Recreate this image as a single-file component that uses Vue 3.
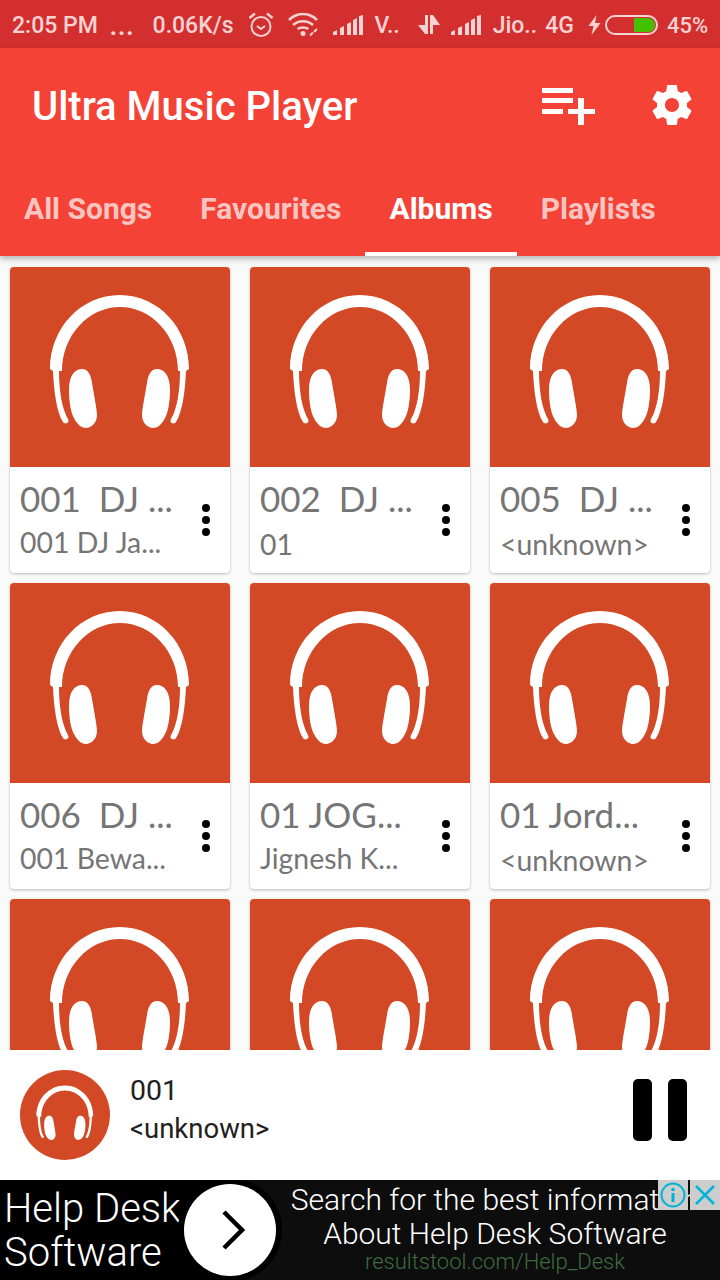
<template>
  <div class="phone">
    <div class="status">
      <span class="st-time">2:05 PM</span>
      <span class="st-dots">...</span>
      <span class="st-speed">0.06K/s</span>
      <svg class="st-alarm" width="26" height="26" viewBox="0 0 26 26" fill="none" stroke="#f8d2d2" stroke-width="2">
        <circle cx="13" cy="14.500" r="9.500" />
        <path d="M9 14l4 3 4-3" />
        <path d="M1.500 6l5.500-4.500M24.500 6L19 1.500" stroke-width="2.500" />
      </svg>
      <svg class="st-wifi" width="32" height="24" viewBox="0 0 32 24" fill="none" stroke="#f8d2d2" stroke-width="2.500">
        <path d="M1 7c8-8 20-8 28 0M5 12c6-5 14-5 20 0M9.500 16c3-2 8-2 11 0" />
        <circle cx="15" cy="20.500" r="2.500" fill="#f8d2d2" stroke="none" />
        <path d="M22 22.500l3-3M26 19l3-3" stroke-width="2" />
      </svg>
      <svg class="st-signal" width="30" height="20" viewBox="0 0 30 20" fill="#f8d2d2">
        <path d="M0 20v-3l4-2v5zM7 20v-7l4-2v9zM14 20V9l4-2v13zM20 20V5l4-2v17zM26 20V1l4-1v20z" />
      </svg>
      <span class="st-carrier first">V..</span>
      <svg class="st-arrows" width="22" height="20" viewBox="0 0 22 20" fill="#f8d2d2">
        <path d="M7 0h3v19H7zM0 10h7v9zM12 0h3v19h-3zM15 0l7 10h-7z" />
      </svg>
      <svg class="st-signal second" width="30" height="20" viewBox="0 0 30 20" fill="#f8d2d2">
        <path d="M0 20v-3l4-2v5zM7 20v-7l4-2v9zM14 20V9l4-2v13zM20 20V5l4-2v17zM26 20V1l4-1v20z" />
      </svg>
      <span class="st-carrier jio">Jio..</span>
      <span class="st-carrier net">4G</span>
      <svg class="st-bolt" width="13" height="20" viewBox="0 0 12 20" fill="#f8d2d2">
        <path d="M8 0L0 11h5l-2 9 9-12H6.500z" />
      </svg>
      <div class="st-battery"><div class="st-charge"></div></div>
      <span class="st-pct">45%</span>
    </div>

    <header class="appbar">
      <div class="toolbar">
        <h1 class="title">Ultra Music Player</h1>
        <svg class="queue-icon" width="53" height="37" viewBox="0 0 53 37" fill="#fff">
          <path d="M0 0h31v5H0zM0 10h31v5H0zM0 21h21v5H0zM26 21h10V10h6v11h11v5H42v11h-6V26H26z" />
        </svg>
        <svg class="gear-icon" width="48" height="48" viewBox="0 0 24 24" fill="#fff">
          <path d="M19.430 12.980c.040-.320.070-.640.070-.980s-.030-.660-.070-.980l2.110-1.650c.190-.150.240-.420.120-.640l-2-3.460c-.120-.220-.390-.300-.610-.220l-2.490 1c-.520-.400-1.080-.730-1.690-.980l-.380-2.650C14.460 2.180 14.250 2 14 2h-4c-.250 0-.460.180-.490.420l-.380 2.650c-.610.250-1.170.590-1.690.980l-2.490-1c-.230-.090-.490 0-.610.220l-2 3.460c-.130.220-.070.490.120.640l2.110 1.650c-.040.320-.070.650-.070.980s.030.660.070.980l-2.110 1.650c-.190.150-.240.420-.120.640l2 3.460c.120.220.390.300.610.220l2.490-1c.520.400 1.080.730 1.690.980l.380 2.650c.030.240.240.420.490.420h4c.250 0 .460-.180.490-.420l.380-2.650c.610-.250 1.170-.590 1.690-.980l2.490 1c.230.090.490 0 .610-.220l2-3.460c.120-.220.070-.490-.120-.640l-2.110-1.650zM12 15.500c-1.930 0-3.500-1.570-3.500-3.500s1.570-3.500 3.500-3.500 3.500 1.570 3.500 3.500-1.570 3.500-3.500 3.500z" />
        </svg>
      </div>
      <nav class="tabs">
        <div
          v-for="tab in tabs"
          :key="tab"
          class="tab"
          :class="{ active: tab === 'Albums' }"
        >
          {{ tab }}
        </div>
      </nav>
    </header>

    <main class="grid">
      <div v-for="(album, index) in albums" :key="index" class="card">
        <div class="cover">
          <svg width="220" height="200" viewBox="0 0 220 200">
            <path :d="headphones" fill="#fff" />
          </svg>
        </div>
        <div class="info">
          <div class="texts">
            <div class="album-title">{{ album.title }}</div>
            <div class="album-sub" :class="{ clipped: album.sub.endsWith('...') }">{{ album.sub }}</div>
          </div>
          <div class="more"><i></i><i></i><i></i></div>
        </div>
      </div>
    </main>

    <section class="player">
      <div class="disc">
        <svg width="90" height="90" viewBox="0 0 220 200">
          <path :d="headphones" fill="#fff" />
        </svg>
      </div>
      <div class="now">
        <div class="now-title">001</div>
        <div class="now-sub">&lt;unknown&gt;</div>
      </div>
      <div class="pause"><i></i><i></i></div>
    </section>

    <footer class="ad">
      <div class="ad-left">Help Desk<br />Software</div>
      <div class="ad-go">
        <svg width="24" height="40" viewBox="0 0 24 40" fill="none" stroke="#000" stroke-width="4.500">
          <path d="M3 2l18 18L3 38" />
        </svg>
      </div>
      <div class="ad-right">
        <div class="ad-line one">Search for the best information</div>
        <div class="ad-line two">About Help Desk Software</div>
        <div class="ad-url">resultstool.com/Help_Desk</div>
      </div>
      <div class="ad-badges">
        <span class="badge">
          <svg width="26" height="26" viewBox="0 0 26 26" fill="none" stroke="#00b4d8" stroke-width="2">
            <circle cx="13" cy="13" r="11.500" />
            <path d="M13 11v9" stroke-width="3" />
            <circle cx="13" cy="7.500" r="1.800" fill="#00b4d8" stroke="none" />
          </svg>
        </span>
        <span class="badge">
          <svg width="22" height="22" viewBox="0 0 22 22" fill="none" stroke="#00b4d8" stroke-width="2.500">
            <path d="M2 2l18 18M20 2L2 20" />
          </svg>
        </span>
      </div>
    </footer>
  </div>
</template>

<script setup>
const tabs = ['All Songs', 'Favourites', 'Albums', 'Playlists']

// last row is covered by the player, so its texts stay empty
const albums = [
  { title: '001  DJ ...', sub: '001 DJ Ja...' },
  { title: '002  DJ ...', sub: '01' },
  { title: '005  DJ ...', sub: '<unknown>' },
  { title: '006  DJ ...', sub: '001 Bewa...' },
  { title: '01 JOG...', sub: 'Jignesh K...' },
  { title: '01 Jord...', sub: '<unknown>' },
  { title: '', sub: '' },
  { title: '', sub: '' },
  { title: '', sub: '' },
]

// band, the two wires and the two ear cups, in cover coordinates
const headphones =
  'M40 102 C40 61 71 28 110 28 C148 28 179 61 179 102 L176 104 L168 104 C168 69 142 40 110 40 C78 40 52 69 52 104 L43 104 Z ' +
  'M43 104 L49 104 C49 124 52 142 58 152 C60 156 55 158 53 155 C47 146 44 126 43 104 Z ' +
  'M176 104 L170 104 C170 124 167 142 161 152 C159 156 164 158 166 155 C172 146 175 126 176 104 Z ' +
  'M72 102 C65 102 59 108 59 123 C59 135 61 146 64 151 C67 157 71 161 76 161 C81 161 87 156 87 148 C87 143 84 128 82 116 C81 108 78 102 72 102 Z ' +
  'M147 102 C154 102 160 108 160 123 C160 135 158 146 155 151 C152 157 148 161 143 161 C138 161 132 156 132 148 C132 143 135 128 137 116 C138 108 141 102 147 102 Z'
</script>

<style>
html,
body {
  margin: 0;
  background: #fafafa;
}
</style>

<style scoped>
.phone {
  width: 720px;
  height: 1280px;
  display: flex;
  flex-direction: column;
  overflow: hidden;
  background: #fafafa;
  font-family: Roboto, sans-serif;
}

.status {
  height: 48px;
  flex: none;
  box-sizing: border-box;
  display: flex;
  align-items: center;
  padding: 2px 0 0 12px;
  background: #d32f2f;
  color: #f8d2d2;
  font-size: 23px;
  font-weight: 500;
  white-space: nowrap;
}

.st-dots {
  margin-left: 12px;
  font-weight: 700;
  font-size: 25px;
  letter-spacing: 1px;
  position: relative;
  top: 1px;
}

.st-speed {
  margin-left: 18px;
}

.st-alarm {
  margin-left: 14px;
}

.st-wifi {
  margin-left: 14px;
}

.st-signal {
  margin-left: 13px;
}

.st-carrier.first {
  margin-left: 12px;
}

.st-arrows {
  margin-left: 18px;
}

.st-signal.second {
  margin-left: 11px;
}

.st-carrier.jio {
  margin-left: 12px;
}

.st-carrier.net {
  margin-left: 8px;
}

.st-bolt {
  margin-left: 14px;
}

.st-battery {
  width: 53px;
  height: 20px;
  margin-left: 4px;
  box-sizing: border-box;
  border: 2px solid #f8d2d2;
  border-radius: 10px;
  overflow: hidden;
  display: flex;
  justify-content: flex-end;
  padding: 1px;
}

.st-charge {
  width: 21px;
  background: #43c000;
  border-radius: 0 7px 7px 0;
}

.st-pct {
  margin-left: 9px;
  font-size: 22px;
}

.appbar {
  height: 208px;
  flex: none;
  display: flex;
  flex-direction: column;
  background: #f44336;
  box-shadow: 0 3px 6px rgba(0, 0, 0, 0.28);
  position: relative;
  z-index: 2;
}

.toolbar {
  height: 112px;
  box-sizing: border-box;
  display: flex;
  align-items: center;
  padding: 4px 24px 0 32px;
}

.title {
  flex: 1;
  margin: 0;
  color: #fff;
  font-size: 40px;
  font-weight: 500;
}

.queue-icon {
  margin-right: 53px;
  margin-top: 1px;
}

.gear-icon {
  margin-top: -3px;
}

.tabs {
  flex: 1;
  display: flex;
}

.tab {
  display: flex;
  align-items: center;
  justify-content: center;
  height: 96px;
  box-sizing: border-box;
  padding: 0 24px;
  color: rgba(255, 255, 255, 0.7);
  font-size: 30px;
  font-weight: 700;
}

.tab.active {
  color: #fff;
  border-bottom: 4px solid #fff;
  padding-top: 4px;
}

.grid {
  flex: 1;
  min-height: 0;
  overflow: hidden;
  display: grid;
  grid-template-columns: repeat(3, 220px);
  grid-auto-rows: 306px;
  column-gap: 20px;
  row-gap: 10px;
  padding: 11px 10px 0;
}

.card {
  display: flex;
  flex-direction: column;
  overflow: hidden;
  background: #fff;
  border-radius: 4px;
  box-shadow: 0 1px 3px rgba(0, 0, 0, 0.25);
}

.cover {
  height: 200px;
  flex: none;
  background: #d34925;
}

.cover svg {
  display: block;
}

.info {
  flex: 1;
  display: flex;
  align-items: center;
  padding-left: 10px;
  font-family: Lato, sans-serif;
  color: #757575;
}

.texts {
  flex: 1;
  min-width: 0;
  align-self: flex-start;
  padding-top: 11px;
}

.album-title {
  font-size: 35px;
  line-height: 40px;
  white-space: pre;
}

.album-sub {
  font-size: 28.400px;
  line-height: 36px;
  margin-top: 8px;
  white-space: pre;
}

.album-sub.clipped {
  margin-top: 6px;
}

.more {
  width: 48px;
  flex: none;
  display: flex;
  flex-direction: column;
  align-items: center;
  gap: 4px;
}

.more i {
  width: 8px;
  height: 8px;
  border-radius: 50%;
  background: #000;
}

.player {
  height: 130px;
  flex: none;
  box-sizing: border-box;
  display: flex;
  align-items: center;
  padding: 0 33px 0 20px;
  background: #fff;
  border-radius: 4px;
  position: relative;
}

.disc {
  width: 90px;
  height: 90px;
  flex: none;
  border-radius: 50%;
  background: #d34925;
  overflow: hidden;
}

.disc svg {
  display: block;
}

.now {
  flex: 1;
  margin-left: 20px;
  margin-bottom: 10px;
  color: #212121;
}

.now-title {
  font-size: 28.500px;
  line-height: 38px;
}

.now-sub {
  font-size: 27.500px;
  line-height: 38px;
}

.pause {
  display: flex;
  gap: 16px;
  margin-bottom: 10px;
}

.pause i {
  width: 19px;
  height: 62px;
  background: #000;
  border-radius: 5px;
}

.ad {
  height: 100px;
  flex: none;
  display: flex;
  position: relative;
  overflow: hidden;
  background: #0d0d0d;
  color: #fff;
  font-weight: 300;
}

.ad-left {
  width: 230px;
  box-sizing: border-box;
  padding: 7px 0 0 4px;
  background: #000;
  font-size: 40px;
  line-height: 44px;
  white-space: nowrap;
}

.ad-go {
  position: absolute;
  left: 184px;
  top: 4px;
  width: 92px;
  height: 92px;
  display: flex;
  align-items: center;
  justify-content: center;
  border-radius: 50%;
  background: #fff;
  box-shadow: 0 0 0 6px #000;
}

.ad-go svg {
  margin-left: 6px;
}

.ad-right {
  flex: 1;
  min-width: 0;
  padding: 0 10px 0 50px;
  text-align: center;
  overflow: hidden;
}

.ad-line {
  font-size: 30px;
  white-space: nowrap;
}

.ad-line.one {
  line-height: 40px;
}

.ad-line.two {
  line-height: 28px;
}

.ad-url {
  font-size: 22px;
  line-height: 28px;
  color: #3d6b3f;
}

.ad-badges {
  position: absolute;
  right: 0;
  top: 0;
  display: flex;
  gap: 2px;
}

.badge {
  width: 30px;
  height: 30px;
  display: flex;
  align-items: center;
  justify-content: center;
  background: #cdcdcd;
}
</style>
